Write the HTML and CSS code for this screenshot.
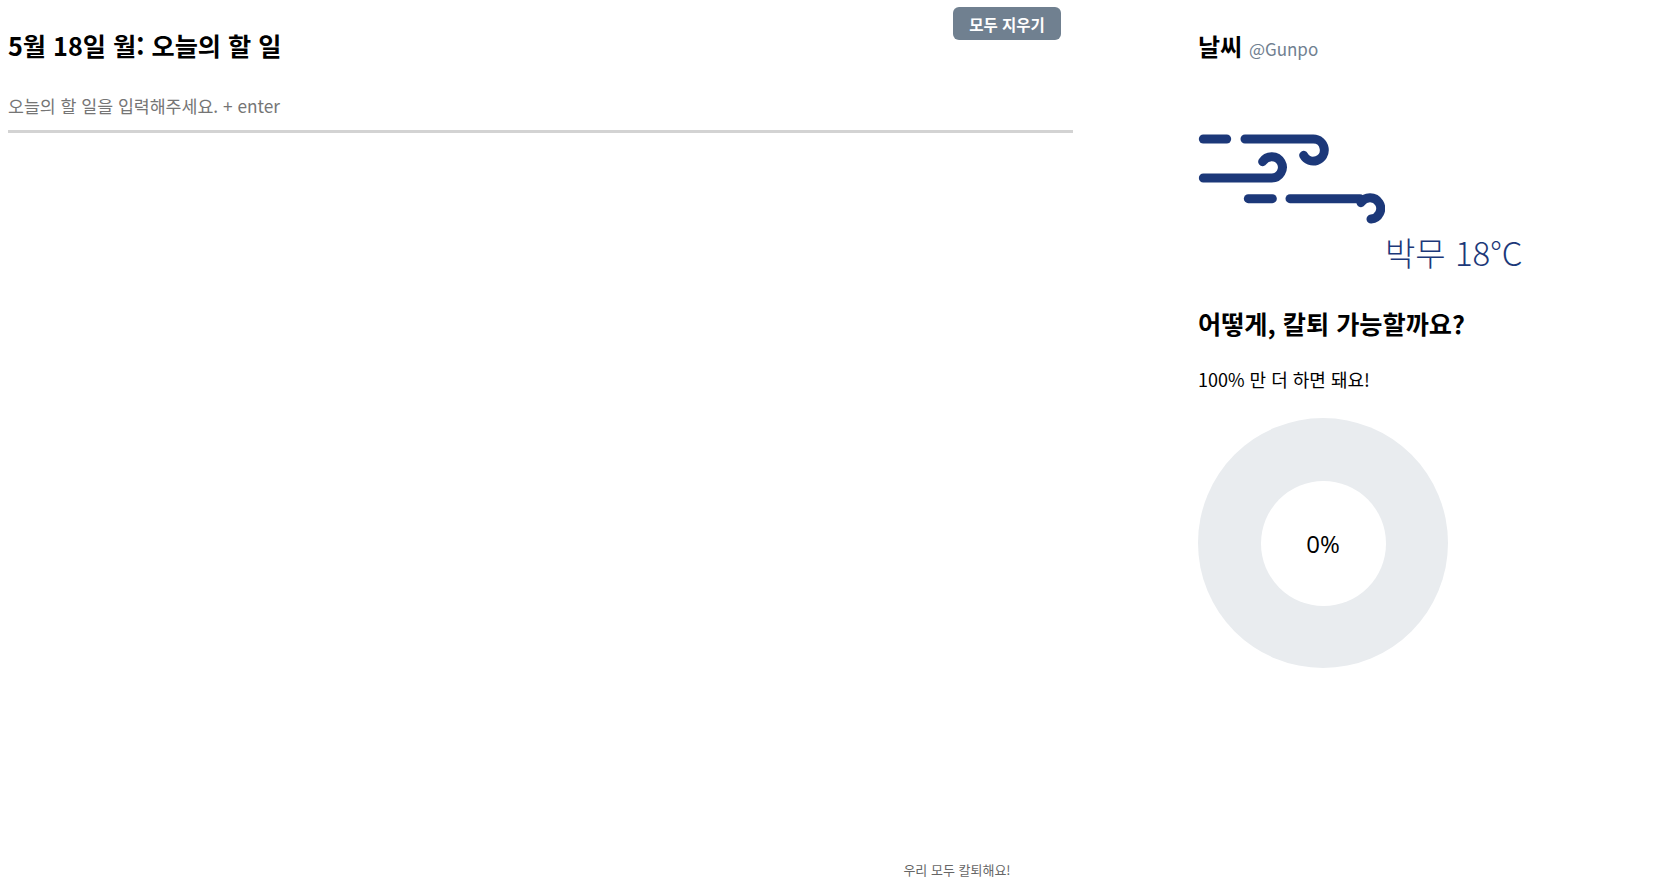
FILE: index.html
```html
<!DOCTYPE html>
<html lang="ko">
<head>
  <meta charset="UTF-8" />
  <title>오늘의 할 일</title>
  <meta name="viewport" content="width=device-width, initial-scale=1.0" />
  <link rel="stylesheet" href="styles.css">
</head>
<body>

  <div class="page">
    <main class="todo">
      <div class="todo-head">
        <h2 class="todo-title">5월 18일 월: 오늘의 할 일</h2>
        <button class="clear-btn">모두 지우기</button>
      </div>
      <input class="todo-input" type="text" placeholder="오늘의 할 일을 입력해주세요. + enter" />
    </main>

    <aside class="side">
      <h2 class="weather-title">날씨 <span class="weather-place">@Gunpo</span></h2>

      <div class="weather">
        <svg class="weather-icon" viewBox="24 27 561 270" fill="none" stroke="#1c3879" stroke-width="27" stroke-linecap="round">
          <path d="M40 42H110" />
          <path d="M165 42H370A33 33 0 1 1 341 91" />
          <path d="M40 159H245A32 32 0 1 0 218 110" />
          <path d="M175 221H247" />
          <path d="M300 221H510" />
          <path d="M513 233A32 32 0 1 1 543 282" />
        </svg>
        <span class="weather-text">박무 18°C</span>
      </div>

      <h2 class="leave-title">어떻게, 칼퇴 가능할까요?</h2>
      <p class="leave-text">100% 만 더 하면 돼요!</p>

      <div class="donut">
        <div class="donut-hole">0%</div>
      </div>
    </aside>
  </div>

  <footer class="foot">우리 모두 칼퇴해요!</footer>

</body>
</html>
```

FILE: styles.css
```css
body {
  font-family: 'Noto Sans CJK KR', 'Noto Sans', sans-serif;
  background: #fff;
  color: #000;
  margin: 0;
  min-height: 885px;
  display: flex;
  flex-direction: column;
}

.page {
  display: flex;
  flex: 1;
  padding-left: 8px;
}

.todo {
  width: 1065px;
}

.todo-head {
  display: flex;
  justify-content: space-between;
  align-items: flex-start;
  padding-top: 7px;
  padding-right: 12px;
}

.todo-title {
  margin: 19px 0 0;
  font-size: 25.2px;
  line-height: 38px;
  font-weight: 700;
}

.clear-btn {
  width: 108px;
  height: 33px;
  padding: 0;
  border: none;
  border-radius: 6px;
  background: #708090;
  color: #fff;
  font-family: inherit;
  font-size: 15.5px;
  font-weight: 700;
  cursor: pointer;
}

.todo-input {
  display: block;
  box-sizing: border-box;
  width: 100%;
  height: 51px;
  margin-top: 18px;
  padding: 0 0 2px;
  border: none;
  border-bottom: 3px solid #d3d3d3;
  outline: none;
  font-family: inherit;
  font-size: 17.3px;
}

.todo-input::placeholder {
  color: #757575;
}

.side {
  margin-left: 125px;
  width: 340px;
}

.weather-title {
  margin: 26px 0 0;
  font-size: 24px;
  line-height: 40px;
  font-weight: 700;
}

.weather-place {
  font-size: 17px;
  font-weight: 400;
  color: #708090;
}

.weather {
  display: flex;
  align-items: flex-end;
  margin-top: 65px;
}

.weather-icon {
  width: 187px;
  height: 90px;
  margin-bottom: 51px;
  flex-shrink: 0;
}

.weather-text {
  font-size: 33px;
  font-weight: 300;
  line-height: 46px;
  color: #1c3879;
  white-space: nowrap;
}

.leave-title {
  margin: 28px 0 0;
  font-size: 25.2px;
  line-height: 40px;
  font-weight: 700;
}

.leave-text {
  margin: 23px 0 0;
  font-size: 18px;
  line-height: 26px;
}

.donut {
  display: flex;
  align-items: center;
  justify-content: center;
  width: 250px;
  height: 250px;
  margin-top: 26px;
  border-radius: 50%;
  background: #e9ecef;
}

.donut-hole {
  display: flex;
  align-items: center;
  justify-content: center;
  width: 125px;
  height: 125px;
  border-radius: 50%;
  background: #fff;
  font-family: 'Open Sans', sans-serif;
  font-size: 24px;
}

.foot {
  height: 30px;
  line-height: 30px;
  padding-left: 260px;
  text-align: center;
  font-size: 13px;
  color: #666;
}
```
